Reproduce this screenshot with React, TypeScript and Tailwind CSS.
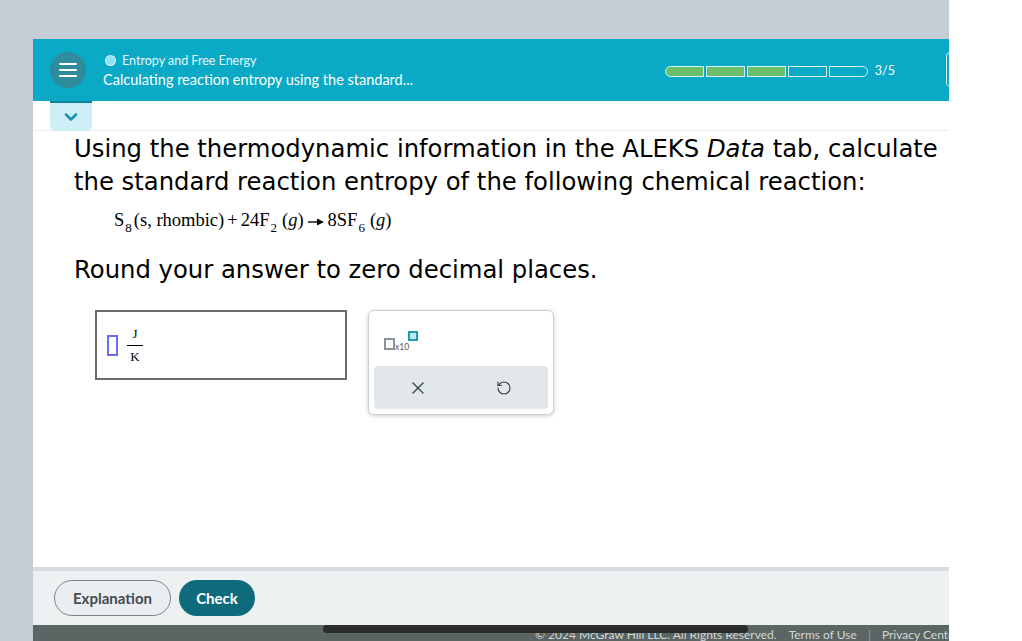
import { X, RotateCcw, ChevronDown } from "lucide-react";

const sans = { fontFamily: "Lato, 'Open Sans', Arial, sans-serif" };
const serif = { fontFamily: "'Liberation Serif', 'Times New Roman', serif" };
const body = { fontFamily: "'DejaVu Sans', Verdana, sans-serif" };

function ProgressBar({ done, total }: { done: number; total: number }) {
  return (
    <div className="flex items-center gap-[2px]">
      {Array.from({ length: total }).map((_, i) => (
        <div
          key={i}
          className={
            "h-[11px] w-[39px] border border-[#d6f3f8] " +
            (i < done ? "bg-[#6cbf6a] " : "bg-transparent ") +
            (i === 0 ? "rounded-l-full " : "") +
            (i === total - 1 ? "rounded-r-full" : "")
          }
        />
      ))}
      <span className="ml-[5px] text-[12.5px] text-white" style={sans}>
        {done}/{total}
      </span>
    </div>
  );
}

function Header() {
  return (
    <div className="relative flex h-[62px] items-center bg-[#0aa9c5]" style={sans}>
      <div className="ml-[17px] flex h-[36px] w-[36px] flex-col items-center justify-center gap-[4px] rounded-full bg-[#2f8c9c]">
        <span className="h-[2px] w-[18px] rounded bg-white" />
        <span className="h-[2px] w-[18px] rounded bg-white" />
        <span className="h-[2px] w-[18px] rounded bg-white" />
      </div>
      <div className="ml-[17px] mt-[2px] flex flex-col">
        <div className="flex items-center gap-[6px] pl-[2px]">
          <span className="h-[11px] w-[11px] rounded-full border border-white/60 bg-[#8fe3f2]" />
          <span className="text-[12.5px] leading-[17px] text-[#e6f7fb]">Entropy and Free Energy</span>
        </div>
        <div className="text-[14.5px] leading-[21px] text-white">
          Calculating reaction entropy using the standard...
        </div>
      </div>
      <div className="ml-auto mr-[54px] pt-[2px]">
        <ProgressBar done={3} total={5} />
      </div>
      <div className="absolute right-[-30px] top-[13px] h-[35px] w-[33px] rounded-[4px] border border-[#d6f3f8]" />
    </div>
  );
}

function Arrow() {
  return (
    <svg width="18" height="10" viewBox="0 0 18 10" className="mx-[3px] inline-block">
      <line x1="1" y1="5" x2="12" y2="5" stroke="black" strokeWidth="1.4" />
      <polygon points="10,1.5 17,5 10,8.5" fill="black" />
    </svg>
  );
}

function Sub({ children }: { children: React.ReactNode }) {
  return <span className="relative top-[6px] ml-[1px] mr-[2px] text-[13px]">{children}</span>;
}

function Equation() {
  return (
    <div className="ml-[81px] mt-[8px] text-[18.5px] leading-[28px] text-black" style={serif}>
      S<Sub>8</Sub>(s, rhombic)<span className="mx-[3px]">+</span>24F<Sub>2</Sub>
      <span className="ml-[3px]">(</span>
      <i>g</i>)<Arrow />8SF<Sub>6</Sub>
      <span className="ml-[3px]">(</span>
      <i>g</i>)
    </div>
  );
}

function AnswerBox() {
  return (
    <div className="flex h-[70px] w-[252px] items-center border-2 border-[#6b6b6b] bg-white pl-[10px]">
      <div className="h-[21px] w-[11px] border-2 border-[#6b6bf5]" />
      <div className="ml-[9px] flex flex-col items-center text-[13px] leading-[16px] text-black" style={serif}>
        <span>J</span>
        <span className="my-[3px] h-px w-[16px] bg-black" />
        <span>K</span>
      </div>
    </div>
  );
}

function ToolPanel() {
  return (
    <div className="ml-[21px] flex h-[105px] w-[186px] flex-col rounded-[6px] border border-[#c9cfd2] bg-white p-[5px] shadow-[0_1px_4px_rgba(0,0,0,0.2)]">
      <div className="flex h-[50px] items-start pl-[10px] pt-[15px]">
        <div className="mt-[7px] h-[12px] w-[11px] border-2 border-[#8a9499]" />
        <span className="mt-[12px] text-[8.5px] leading-none text-[#555]" style={sans}>
          x10
        </span>
        <div className="ml-[-1px] h-[10px] w-[10px] border-2 border-[#1b9bb3] bg-[#bfeaf3]" />
      </div>
      <div className="flex flex-1 items-center rounded-[4px] bg-[#e1e7ea] pl-[34px]">
        <X size={20} strokeWidth={1.6} className="text-[#3d4a50]" />
        <RotateCcw size={16} strokeWidth={1.8} className="ml-[68px] text-[#3d4a50]" />
      </div>
    </div>
  );
}

export default function App() {
  return (
    <div className="flex h-[641px] w-[1022px] overflow-hidden bg-white">
      <div className="flex h-full w-[949px] flex-col bg-[#c3cdd3] pl-[33px] pt-[39px]">
        <div className="flex flex-1 flex-col overflow-hidden bg-white">
          <Header />
          <div className="relative flex flex-1 flex-col">
            <div className="flex h-[30px] border-b border-[#ececec]">
              <div className="ml-[17px] flex h-[30px] w-[42px] items-center justify-center rounded-b-[6px] border-t-2 border-[#10829a] bg-[#cdeef5]">
                <ChevronDown size={20} strokeWidth={3} className="text-[#1495ad]" />
              </div>
            </div>
            <div className="ml-[41px] mt-[1px] text-[24.3px] leading-[33px] text-black" style={body}>
              Using the thermodynamic information in the ALEKS <i>Data</i> tab, calculate
              <br />
              the standard reaction entropy of the following chemical reaction:
            </div>
            <Equation />
            <div className="ml-[41px] mt-[17px] text-[24.3px] leading-[33px] text-black" style={body}>
              Round your answer to zero decimal places.
            </div>
            <div className="ml-[62px] mt-[24px] flex items-start">
              <AnswerBox />
              <ToolPanel />
            </div>
          </div>
          <div className="h-[4px] bg-[#d6dde0]" />
          <div className="flex h-[54px] items-center gap-[8px] bg-[#eef1f2] pl-[21px]" style={sans}>
            <button className="h-[36px] w-[117px] rounded-full border border-[#7d8487] bg-[#ebeef0] text-[15px] font-bold text-[#454b4e]">
              Explanation
            </button>
            <button className="h-[36px] w-[76px] rounded-full bg-[#0f6b7c] text-[15px] font-bold text-white">
              Check
            </button>
          </div>
          <div className="relative h-[16px] bg-[#5b6563]">
            <div className="absolute left-[290px] top-0 h-[8px] w-[425px] rounded-full bg-[#2a2b2b]" />
            <div className="whitespace-nowrap pl-[502px] pt-[3px] text-[12px] leading-[13px] text-[#d3d9d9]" style={sans}>
              © 2024 McGraw Hill LLC. All Rights Reserved.<span className="ml-[12px]">Terms of Use</span>
              <span className="mx-[11px] text-[#9aa3a3]">|</span>Privacy Center
            </div>
          </div>
        </div>
      </div>
      <div className="flex-1 bg-white" />
    </div>
  );
}
